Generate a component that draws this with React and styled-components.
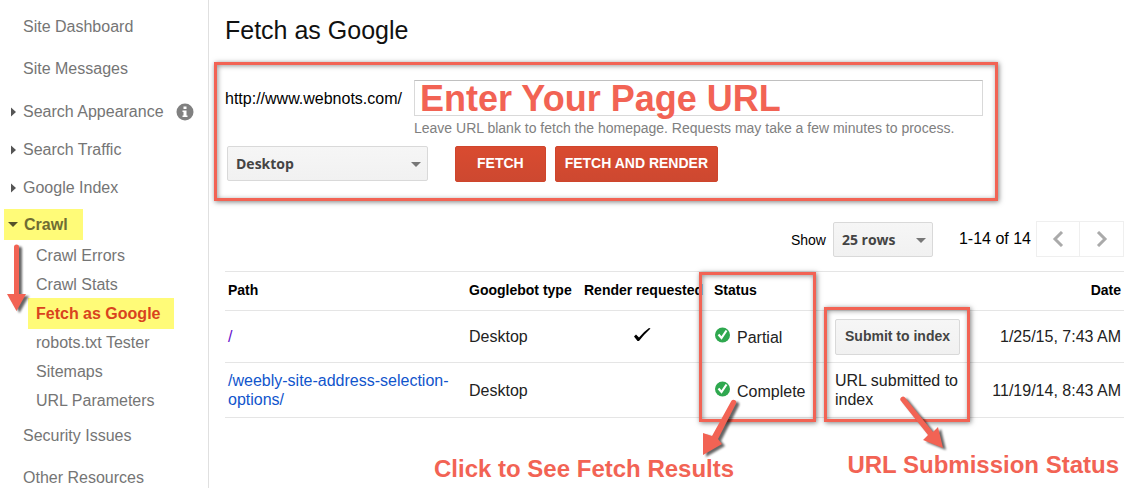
import React from 'react'
import styled, { createGlobalStyle } from 'styled-components'

const RED = '#f26354'

const GlobalStyle = createGlobalStyle`
  * {
    box-sizing: border-box;
  }
  body {
    margin: 0;
    background: #fff;
    color: #000;
    font-family: "Liberation Sans", Arial, sans-serif;
    font-size: 16px;
  }
`

const Page = styled.div`
  display: flex;
  min-height: 100vh;
`

/* ---------- sidebar ---------- */

const Sidebar = styled.nav`
  position: relative;
  flex: 0 0 209px;
  padding-top: 6px;
  border-right: 1px solid #e0e0e0;
`

const NavList = styled.ul`
  margin: 0;
  padding: 0;
  list-style: none;
`

const NavItem = styled.li`
  padding: 11px 0 11px 23px;
  line-height: 20px;
  &:last-child {
    padding-bottom: 0;
  }
`

const NavLink = styled.a`
  color: #757575;
  text-decoration: none;
`

const NavGroups = styled.li`
  padding-top: 3px;
`

const Group = styled.div`
  display: flex;
  align-items: center;
  height: 38px;
  padding-left: 11px;
`

const GroupLink = styled(NavLink)`
  display: flex;
  align-items: center;
  gap: 7px;
`

const InfoIcon = styled.svg`
  margin-left: 12px;
`

const OpenGroup = styled.div`
  padding: 2px 0 1px 4px;
`

const OpenLink = styled(NavLink)`
  display: inline-flex;
  align-items: center;
  gap: 6px;
  height: 31px;
  padding: 0 15px 0 4px;
  background: #fffb78;
  color: #6f6c33;
  font-weight: bold;
`

const SubItem = styled.li`
  display: flex;
  align-items: center;
  height: 29px;
  padding-left: 28px;
`

const SubLink = styled(NavLink)`
  flex: none;
  padding: 0 14px 0 8px;
  line-height: 31px;
  ${(props) => props.$active && `
    background: #fffb78;
    color: #d9431e;
    font-weight: bold;
  `}
`

/* ---------- main ---------- */

const Main = styled.main`
  flex: 1;
  min-width: 0;
  padding: 15px 3px 0 16px;
`

const Title = styled.h1`
  margin: 0;
  font-size: 25px;
  font-weight: normal;
  line-height: 30px;
  color: #111;
`

const FetchForm = styled.form`
  margin: 17px 126px 0 -11px;
  padding: 15px 12px 16px 8px;
  border: 3px solid ${RED};
  box-shadow: 1px 1px 5px rgba(0, 0, 0, 0.5), inset 1px 1px 5px rgba(0, 0, 0, 0.4);
`

const UrlRow = styled.div`
  display: flex;
`

const UrlLabel = styled.label`
  flex: 0 0 189px;
  line-height: 38px;
`

const UrlField = styled.div`
  position: relative;
  flex: 1;
`

const UrlInput = styled.input`
  display: block;
  width: 100%;
  height: 36px;
  padding: 0 6px;
  border: 1px solid #d9d9d9;
  border-top-color: #c0c0c0;
  font: inherit;
`

const UrlNote = styled.span`
  position: absolute;
  top: 0;
  left: 6px;
  color: ${RED};
  font-size: 36px;
  font-weight: bold;
  line-height: 38px;
  white-space: nowrap;
  pointer-events: none;
`

const Hint = styled.p`
  margin: 4px 0 0;
  color: #808080;
  font-size: 14px;
  line-height: 16px;
`

const Actions = styled.div`
  display: flex;
  gap: 9px;
  margin-top: 10px;
  padding-left: 2px;
`

const SelectWrap = styled.div`
  position: relative;
  width: ${(props) => props.$width}px;
  svg {
    position: absolute;
    top: 16px;
    right: 7px;
    pointer-events: none;
  }
`

const Select = styled.select`
  appearance: none;
  width: 100%;
  height: 35px;
  padding: 0 8px;
  border: 1px solid #d9d9d9;
  border-radius: 2px;
  background: linear-gradient(#f6f6f6, #f1f1f1);
  color: #444;
  font-family: "Open Sans", sans-serif;
  font-size: 14px;
  font-weight: bold;
`

const RedButton = styled.button`
  height: 36px;
  padding: 0 ${(props) => props.$pad}px 2px;
  border: 1px solid #cf452c;
  border-radius: 2px;
  background: linear-gradient(#d94b30, #cd4830);
  color: #fff;
  font-family: inherit;
  font-size: 14px;
  font-weight: bold;
  white-space: nowrap;
  &:first-of-type {
    margin-left: 18px;
  }
`

const Toolbar = styled.div`
  display: flex;
  justify-content: flex-end;
  align-items: center;
  margin-top: 20px;
`

const ShowLabel = styled.label`
  margin-right: 7px;
  padding-top: 2px;
  font-size: 14px;
`

const Count = styled.span`
  margin: 0 5px 0 26px;
`

const Pager = styled.div`
  display: flex;
`

const PagerButton = styled.button`
  display: flex;
  align-items: center;
  justify-content: center;
  width: 44px;
  height: 36px;
  padding: 0;
  border: 1px solid #efefef;
  background: #fff;
  & + & {
    border-left: 0;
  }
`

const TableWrap = styled.div`
  position: relative;
  margin-top: 14px;
`

const Table = styled.table`
  width: 100%;
  border-collapse: collapse;
  table-layout: fixed;
  border-top: 1px solid #e5e5e5;
`

const Col = styled.col`
  width: ${(props) => (props.$width ? props.$width + 'px' : 'auto')};
`

const Row = styled.tr`
  height: ${(props) => props.$height}px;
  border-bottom: 1px solid #e5e5e5;
`

const Th = styled.th`
  padding: 0 3px 2px;
  font-size: 14px;
  text-align: ${(props) => props.$align || 'left'};
  white-space: nowrap;
`

const Td = styled.td`
  padding: 0 3px;
  color: #222;
  line-height: 19px;
  text-align: ${(props) => props.$align || 'left'};
`

const CheckCell = styled(Td)`
  padding-right: 12px;
  text-align: center;
`

const PathLink = styled.a`
  color: ${(props) => (props.$visited ? '#6611cc' : '#1155cc')};
  text-decoration: none;
`

const Status = styled.span`
  display: flex;
  align-items: center;
  gap: 7px;
  padding-top: 2px;
  svg {
    flex: none;
    margin-bottom: 5px;
  }
`

const SubmitButton = styled.button`
  display: block;
  width: 125px;
  height: 36px;
  padding: 0 0 2px;
  border: 1px solid #d9d9d9;
  border-radius: 2px;
  background: linear-gradient(#f6f6f6, #f1f1f1);
  color: #444;
  font-family: inherit;
  font-size: 14px;
  font-weight: bold;
`

/* ---------- callouts over the page ---------- */

const Highlight = styled.div`
  position: absolute;
  top: ${(props) => props.$top}px;
  right: ${(props) => props.$right}px;
  bottom: -4px;
  width: ${(props) => props.$width}px;
  border: 3px solid ${RED};
  box-shadow: 1px 1px 5px rgba(0, 0, 0, 0.5), inset 1px 1px 5px rgba(0, 0, 0, 0.4);
  pointer-events: none;
`

const ArrowSvg = styled.svg`
  position: absolute;
  overflow: visible;
  pointer-events: none;
  filter: drop-shadow(3px 2px 1px rgba(0, 0, 0, 0.6));
`

const CrawlArrow = styled(ArrowSvg)`
  top: 244px;
  left: 6px;
`

const StatusArrow = styled(ArrowSvg)`
  top: 128px;
  right: 386px;
`

const SubmitArrow = styled(ArrowSvg)`
  top: 125px;
  right: 179px;
`

const Notes = styled.div`
  display: flex;
  justify-content: space-between;
  height: 32px;
  margin-top: 33px;
  padding: 0 5px 0 209px;
`

const Note = styled.strong`
  align-self: ${(props) => props.$align};
  color: ${RED};
  font-size: 24px;
  line-height: 28px;
  white-space: nowrap;
`

const CaretRight = () => (
  <svg width="5" height="10" viewBox="0 0 5 10" fill="#555">
    <path d="M0 0.5 5 5 0 9.5z" />
  </svg>
)

const CaretDown = ({ color }) => (
  <svg width="10" height="5" viewBox="0 0 10 5" fill={color}>
    <path d="M0 0h10L5 5z" />
  </svg>
)

const Done = () => (
  <svg width="16" height="16" viewBox="0 0 16 16">
    <circle cx="8.5" cy="8" r="7.5" fill="#2fa84f" />
    <path d="M4.5 7.5 7.5 11 12.5 3.5" fill="none" stroke="#fff" strokeWidth="2.2" />
  </svg>
)

const Tick = () => (
  <svg width="18" height="15" viewBox="0 0 18 15">
    <path d="M1 9.5 3 7.500 6 10.500Q11 4.500 16 1L17.500 1.500Q11 7.500 6 14H4.500z" fill="#000" />
  </svg>
)

const Dropdown = ({ id, label, width, options }) => (
  <SelectWrap $width={width}>
    <Select id={id} aria-label={label}>
      {options.map((option) => <option key={option}>{option}</option>)}
    </Select>
    <CaretDown color="#777" />
  </SelectWrap>
)

const groups = ['Search Appearance', 'Search Traffic', 'Google Index']
const crawlPages = [
  'Crawl Errors',
  'Crawl Stats',
  'Fetch as Google',
  'robots.txt Tester',
  'Sitemaps',
  'URL Parameters',
]

const SideNav = () => (
  <Sidebar>
    <NavList>
      <NavItem><NavLink href="#">Site Dashboard</NavLink></NavItem>
      <NavItem><NavLink href="#">Site Messages</NavLink></NavItem>
      <NavGroups>
        {groups.map((name, i) => (
          <Group key={name}>
            <GroupLink href="#"><CaretRight />{name}</GroupLink>
            {i === 0 && (
              <InfoIcon width="18" height="18" viewBox="0 0 18 18">
                <circle cx="9" cy="9" r="8.5" fill="#808080" />
                <path d="M7.500 3.500h3v2.500h-3zM6.500 7.500h4v5h1v1.500h-5v-1.500h1v-3.500h-1z" fill="#fff" />
              </InfoIcon>
            )}
          </Group>
        ))}
        <OpenGroup>
          <OpenLink href="#"><CaretDown color="#55522a" />Crawl</OpenLink>
        </OpenGroup>
        <NavList>
          {crawlPages.map((name) => (
            <SubItem key={name}>
              <SubLink href="#" $active={name === 'Fetch as Google'}>{name}</SubLink>
            </SubItem>
          ))}
        </NavList>
      </NavGroups>
      <NavItem><NavLink href="#">Security Issues</NavLink></NavItem>
      <NavItem><NavLink href="#">Other Resources</NavLink></NavItem>
    </NavList>
    <CrawlArrow width="20" height="68" fill={RED}>
      <path d="M8 3a2.500 2.500 0 0 1 5 0V50H20L10.500 67 1 50H8z" />
    </CrawlArrow>
  </Sidebar>
)

const App = () => {
  return (
    <Page>
      <GlobalStyle />
      <SideNav />
      <Main>
        <Title>Fetch as Google</Title>

        <FetchForm onSubmit={(e) => e.preventDefault()}>
          <UrlRow>
            <UrlLabel htmlFor="url">http://www.webnots.com/</UrlLabel>
            <UrlField>
              <UrlInput id="url" type="text" />
              <UrlNote>Enter Your Page URL</UrlNote>
              <Hint>Leave URL blank to fetch the homepage. Requests may take a few minutes to process.</Hint>
            </UrlField>
          </UrlRow>
          <Actions>
            <Dropdown label="Googlebot type" width={201} options={['Desktop']} />
            <RedButton $pad={21}>FETCH</RedButton>
            <RedButton $pad={9}>FETCH AND RENDER</RedButton>
          </Actions>
        </FetchForm>

        <Toolbar>
          <ShowLabel htmlFor="rows">Show</ShowLabel>
          <Dropdown id="rows" width={100} options={['25 rows']} />
          <Count>1-14 of 14</Count>
          <Pager>
            <PagerButton aria-label="Previous">
              <svg width="12" height="16" fill="none" stroke="#aaa" strokeWidth="3"><path d="M10 1 3 8l7 7" /></svg>
            </PagerButton>
            <PagerButton aria-label="Next">
              <svg width="12" height="16" fill="none" stroke="#aaa" strokeWidth="3"><path d="M2 1l7 7-7 7" /></svg>
            </PagerButton>
          </Pager>
        </Toolbar>

        <TableWrap>
          <Table>
            <colgroup>
              <Col />
              <Col $width={115} />
              <Col $width={130} />
              <Col $width={121} />
              <Col $width={131} />
              <Col $width={161} />
            </colgroup>
            <thead>
              <Row $height={39}>
                <Th>Path</Th>
                <Th>Googlebot type</Th>
                <Th>Render requested</Th>
                <Th>Status</Th>
                <Th />
                <Th $align="right">Date</Th>
              </Row>
            </thead>
            <tbody>
              <Row $height={52}>
                <Td><PathLink href="#" $visited>/</PathLink></Td>
                <Td>Desktop</Td>
                <CheckCell><Tick /></CheckCell>
                <Td><Status><Done />Partial</Status></Td>
                <Td><SubmitButton>Submit to index</SubmitButton></Td>
                <Td $align="right">1/25/15, 7:43 AM</Td>
              </Row>
              <Row $height={55}>
                <Td><PathLink href="#">/weebly-site-address-selection-options/</PathLink></Td>
                <Td>Desktop</Td>
                <CheckCell />
                <Td><Status><Done />Complete</Status></Td>
                <Td>URL submitted to index</Td>
                <Td $align="right">11/19/14, 8:43 AM</Td>
              </Row>
            </tbody>
          </Table>
          <Highlight $top={1} $right={308} $width={117} />
          <Highlight $top={36} $right={154} $width={146} />
          <StatusArrow width="36" height="58" fill={RED}>
            <path d="M29 2.500a2.500 2.500 0 0 1 5 2L16 40 20 45 1 56V34L10 37z" />
          </StatusArrow>
          <SubmitArrow width="46" height="56" fill={RED}>
            <path d="M2 5a2.500 2.500 0 0 1 4-3.500L34 36 39 31 44 52 24 44 29 39z" />
          </SubmitArrow>
        </TableWrap>

        <Notes>
          <Note $align="flex-end">Click to See Fetch Results</Note>
          <Note $align="flex-start">URL Submission Status</Note>
        </Notes>
      </Main>
    </Page>
  )
}

export default App
